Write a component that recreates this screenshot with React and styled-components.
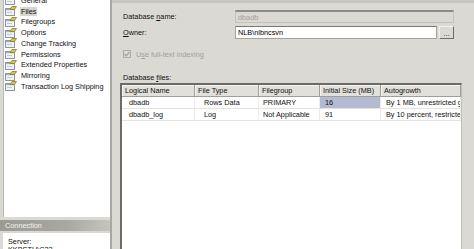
import React from "react";
import styled, { createGlobalStyle } from "styled-components";

const GlobalStyle = createGlobalStyle`
  html, body {
    margin: 0;
    padding: 0;
    background: #dbd9d3;
  }
  body {
    font-family: "Liberation Sans", Arial, sans-serif;
    font-size: 7.3px;
    color: #111;
  }
`;

const Window = styled.div`
  width: 474px;
  height: 249px;
  overflow: hidden;
  display: flex;
  background: #dbd9d3;
`;

const LeftPane = styled.div`
  width: 118px;
  display: flex;
  flex-direction: column;
  background: #dbd9d3;
`;

const Tree = styled.div`
  height: 217px;
  margin-left: 3px;
  background: #fff;
  border-left: 1px solid #b8b6b0;
  overflow: hidden;
`;

const TreeList = styled.ul`
  list-style: none;
  margin: -5px 0 0 0;
  padding: 0;
`;

const TreeItem = styled.li`
  height: 10.75px;
  display: flex;
  align-items: center;
  padding-left: 1px;
  white-space: nowrap;
`;

const ItemLabel = styled.span`
  margin-left: 3px;
  padding: 0 1px;
  line-height: 9px;
  background: ${(p) => (p.$selected ? "#d6d4ce" : "transparent")};
`;

const ConnectionBar = styled.div`
  margin-top: 3px;
  height: 11px;
  display: flex;
  align-items: center;
  padding-left: 5px;
  color: #f2f2f2;
  background: linear-gradient(to right, #9c9a94, #a9a7a1 60%, #c6c4be);
`;

const ConnectionBody = styled.div`
  flex: 1;
  margin: 2px 0 0 3px;
  background: #fff;
  padding: 5px 0 0 5px;
  overflow: hidden;
`;

const InfoLine = styled.div`
  height: 8px;
  line-height: 8px;
  white-space: nowrap;
`;

const Splitter = styled.div`
  width: 2px;
  background: #a9a7a1;
`;

const RightPane = styled.div`
  flex: 1;
  display: flex;
  flex-direction: column;
  padding-right: 12px;
  background: #dbd9d3;
`;

const TopStrip = styled.div`
  height: 3px;
  margin-right: -12px;
  background: #c9c6bf;
`;

const FormRow = styled.div`
  display: flex;
  align-items: center;
  height: 13px;
  margin-top: ${(p) => p.$top}px;
  padding-left: 11px;
`;

const FieldLabel = styled.span`
  width: 112px;
  flex: none;
  white-space: nowrap;
`;

const TextBox = styled.div`
  box-sizing: border-box;
  height: 13px;
  width: ${(p) => p.$width}px;
  display: flex;
  align-items: center;
  padding-left: 2px;
  white-space: nowrap;
  overflow: hidden;
  background: ${(p) => (p.$disabled ? "#dbd9d3" : "#fff")};
  color: ${(p) => (p.$disabled ? "#a2a09a" : "#000")};
  border: 1px solid ${(p) => (p.$disabled ? "#c4c2bc" : "#a5a39d")};
  border-top: ${(p) => (p.$disabled ? "2px solid #8e8c86" : "1px solid #7a7872")};
`;

const BrowseButton = styled.div`
  box-sizing: border-box;
  width: 15px;
  height: 13px;
  margin-left: 2px;
  display: flex;
  align-items: flex-end;
  justify-content: center;
  padding-bottom: 2px;
  line-height: 5px;
  background: #dbd9d3;
  border: 1px solid;
  border-color: #f4f3f0 #6e6c66 #6e6c66 #f4f3f0;
`;

const CheckRow = styled.div`
  display: flex;
  align-items: center;
  height: 10px;
  margin-top: 10px;
  padding-left: 11px;
  color: #a2a09a;
`;

const CheckBox = styled.div`
  box-sizing: border-box;
  width: 8px;
  height: 8px;
  margin-right: 5px;
  border: 1px solid #b0aea8;
  background: #dbd9d3;
  display: flex;
  align-items: center;
  justify-content: center;
`;

const SectionLabel = styled.div`
  margin-top: 14px;
  height: 9px;
  line-height: 9px;
  padding-left: 11px;
`;

const Grid = styled.div`
  flex: 1;
  margin: 1px 0 0 8px;
  background: #fff;
  border-top: 2px solid #6d6b66;
  border-left: 2px solid #6d6b66;
  border-right: 1px solid #c0beb8;
  overflow: hidden;
`;

const GridRow = styled.div`
  display: grid;
  grid-template-columns: 73px 64px 61px 61px 80px;
  height: 12px;
`;

const HeaderCell = styled.div`
  box-sizing: border-box;
  display: flex;
  align-items: center;
  padding-left: 3px;
  white-space: nowrap;
  overflow: hidden;
  background: #e2e0da;
  border-right: 1px solid #a09e98;
  border-bottom: 1px solid #a09e98;
  box-shadow: inset 1px 1px 0 #f6f5f2;
`;

const Cell = styled.div`
  box-sizing: border-box;
  display: flex;
  align-items: center;
  padding-left: ${(p) => p.$pad || 5}px;
  white-space: nowrap;
  overflow: hidden;
  background: ${(p) => (p.$selected ? "#b3bbd2" : "#fff")};
  border-right: 1px solid #ecebe8;
  border-bottom: 1px solid #e4e3df;
`;

const PageIcon = () => (
  <svg width="12" height="10" viewBox="0 0 12 10">
    <rect x="0.5" y="2.5" width="9" height="7" fill="#f1f2f4" stroke="#8a96a8" />
    <rect x="1" y="3" width="8" height="1.2" fill="#9fb0c8" />
    <rect x="2" y="6" width="5" height="1" fill="#c3cad6" />
    <path d="M5 3.5 L7 0.5 L11.5 0.5 L9.5 3.5 Z" fill="#d6c44e" stroke="#8c7c22" strokeWidth="0.8" />
  </svg>
);

const pages = [
  "General",
  "Files",
  "Filegroups",
  "Options",
  "Change Tracking",
  "Permissions",
  "Extended Properties",
  "Mirroring",
  "Transaction Log Shipping",
];

const columns = ["Logical Name", "File Type", "Filegroup", "Initial Size (MB)", "Autogrowth"];

const files = [
  ["dbadb", "Rows Data", "PRIMARY", "16", "By 1 MB, unrestricted growth"],
  ["dbadb_log", "Log", "Not Applicable", "91", "By 10 percent, restricted growth"],
];

const cellPad = [7, 9, 4, 5, 5];

const App = () => {
  return (
    <Window>
      <GlobalStyle />
      <LeftPane>
        <Tree>
          <TreeList>
            {pages.map((p) => (
              <TreeItem key={p}>
                <PageIcon />
                <ItemLabel $selected={p === "Files"}>{p}</ItemLabel>
              </TreeItem>
            ))}
          </TreeList>
        </Tree>
        <ConnectionBar>Connection</ConnectionBar>
        <ConnectionBody>
          <InfoLine>Server:</InfoLine>
          <InfoLine>KKBSTU\C22</InfoLine>
        </ConnectionBody>
      </LeftPane>
      <Splitter />
      <RightPane>
        <TopStrip />
        <FormRow $top={7}>
          <FieldLabel>
            Database <u>n</u>ame:
          </FieldLabel>
          <TextBox $width={219} $disabled>
            dbadb
          </TextBox>
        </FormRow>
        <FormRow $top={3}>
          <FieldLabel>
            <u>O</u>wner:
          </FieldLabel>
          <TextBox $width={202}>NLB\nlbncsvn</TextBox>
          <BrowseButton>...</BrowseButton>
        </FormRow>
        <CheckRow>
          <CheckBox>
            <svg width="6" height="6" viewBox="0 0 6 6">
              <path d="M0.5 3 L2.3 4.8 L5.5 1" fill="none" stroke="#a8a6a0" strokeWidth="1.3" />
            </svg>
          </CheckBox>
          U<u>s</u>e full-text indexing
        </CheckRow>
        <SectionLabel>
          Database <u>f</u>iles:
        </SectionLabel>
        <Grid>
          <GridRow>
            {columns.map((c) => (
              <HeaderCell key={c}>{c}</HeaderCell>
            ))}
          </GridRow>
          {files.map((row, r) => (
            <GridRow key={row[0]}>
              {row.map((v, i) => (
                <Cell key={i} $pad={cellPad[i]} $selected={r === 0 && i === 3}>
                  {v}
                </Cell>
              ))}
            </GridRow>
          ))}
        </Grid>
      </RightPane>
    </Window>
  );
};

export default App;
